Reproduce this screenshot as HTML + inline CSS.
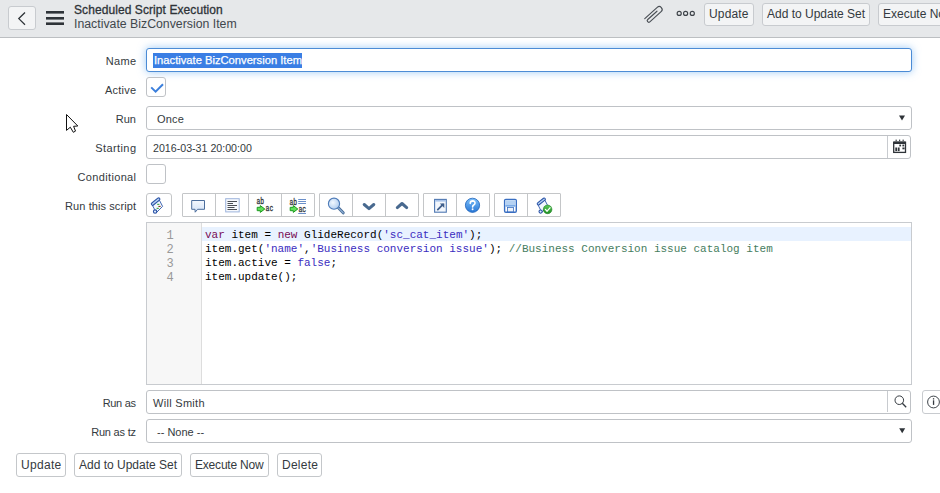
<!DOCTYPE html>
<html><head><meta charset="utf-8">
<style>
*{box-sizing:border-box;margin:0;padding:0}
html,body{width:940px;height:493px;overflow:hidden;background:#fff;font-family:"Liberation Sans",sans-serif;color:#343a40}
.abs{position:absolute}
svg{position:absolute;overflow:visible}
#hdr{position:absolute;left:0;top:0;width:940px;height:38px;background:#e6e8ea;border-bottom:1px solid #bcbfc2}
.btn{position:absolute;background:#f3f4f5;border:1px solid #c8cbcf;border-radius:3px;font-size:12px;color:#343a40;white-space:nowrap;line-height:21px;padding:0 0 0 4px}
.bb{background:#fff;line-height:23px;border-color:#c4c7ca}
.lbl{position:absolute;right:804px;font-size:11px;color:#343a40;white-space:nowrap;text-align:right;line-height:13px}
.inp{position:absolute;left:146px;width:766px;border:1px solid #bfc2c6;border-radius:3px;background:#fff;font-size:11px;white-space:nowrap;color:#343a40;line-height:13px}
.cb{position:absolute;left:146px;width:20px;height:20px;border:1px solid #bfc2c6;border-radius:3px;background:#fff}
.tb{position:absolute;top:193px;height:24px;border:1px solid #c4c6c8;border-radius:1px;background:#fff;display:flex}
.tb>div{width:33px;flex-shrink:0;height:22px;border-right:1px solid #c4c6c8;position:relative}
.tb>div:last-child{border-right:none;width:32px}
.code{position:absolute;left:205px;font-family:"Liberation Mono",monospace;font-size:11px;line-height:14px;white-space:pre;color:#000}
.ln{position:absolute;left:147px;width:26.6px;text-align:right;font-family:"Liberation Mono",monospace;font-size:12px;line-height:14px;color:#999}
.kw{color:#770a55}.st{color:#3a2cc0}.cm{color:#467d5e}
.tri{position:absolute;width:0;height:0;border-left:3px solid transparent;border-right:3px solid transparent;border-top:5px solid #2e3338}
</style></head><body>
<div id="hdr">
  <div class="btn" style="left:8px;top:6px;width:28px;height:24px"></div>
  <svg style="left:0;top:0" width="80" height="37">
    <path d="M25 12.5 L18.8 18.6 L25 24.7" fill="none" stroke="#2e3338" stroke-width="1.3"/>
    <rect x="46" y="11" width="18" height="2.6" fill="#2e3338"/>
    <rect x="46" y="17" width="18" height="2.6" fill="#2e3338"/>
    <rect x="46" y="22.4" width="18" height="2.6" fill="#2e3338"/>
  </svg>
  <div class="abs" style="left:74px;top:3px;font-size:12px;letter-spacing:0.08px;-webkit-text-stroke:0.3px #2e3338;color:#2e3338;white-space:nowrap">Scheduled Script Execution</div>
  <div class="abs" style="left:74px;top:17px;font-size:12.3px;white-space:nowrap;color:#41474d">Inactivate BizConversion Item</div>
  <svg style="left:640px;top:0" width="60" height="30">
    <path transform="translate(6.4 21.0) rotate(-42)" d="M0.4 -2.9 L17.2 -2.9 A2.9 2.9 0 0 1 17.2 2.9 L2.0 2.9 A1.55 1.55 0 0 1 2.0 -0.2 L14.4 -0.2" fill="none" stroke="#4a4f55" stroke-width="1.15" stroke-linecap="round"/>
    <circle cx="39.2" cy="13.4" r="2.05" fill="none" stroke="#3f444a" stroke-width="1.15"/>
    <circle cx="45.6" cy="13.4" r="2.05" fill="none" stroke="#3f444a" stroke-width="1.15"/>
    <circle cx="52.3" cy="13.4" r="2.05" fill="none" stroke="#3f444a" stroke-width="1.15"/>
  </svg>
  <div class="btn" style="left:704px;top:3px;width:50px;height:23px;letter-spacing:0.15px">Update</div>
  <div class="btn" style="left:762px;top:3px;width:108px;height:23px">Add to Update Set</div>
  <div class="btn" style="left:878px;top:3px;width:80px;height:23px">Execute Now</div>
</div>

<!-- Name -->
<div class="lbl" style="top:55px;letter-spacing:0.3px;right:803.70px">Name</div>
<div class="inp" style="top:48px;height:24px;border-color:#4b8bd5;box-shadow:0 0 8px rgba(90,165,240,.6)">
  <div class="abs" style="left:6px;top:4px;height:15px;width:149px;background:#3a7ee4;color:#fff;padding-left:1px;line-height:15px;font-size:11.2px;-webkit-text-stroke:0.25px #fff">Inactivate BizConversion Item</div>
</div>
<!-- Active -->
<div class="lbl" style="top:84px;letter-spacing:0.2px;right:803.80px">Active</div>
<div class="cb" style="top:77px">
  <svg style="left:0;top:0" width="20" height="20"><path d="M4.2 9.4 L8.6 13.6 L16 6.2" fill="none" stroke="#3b7fdc" stroke-width="2"/></svg>
</div>
<!-- Run -->
<div class="lbl" style="top:113px">Run</div>
<div class="inp" style="top:106px;height:24px">
  <div class="abs" style="left:10px;top:6px;letter-spacing:0.2px">Once</div>
  <svg style="left:752px;top:8px" width="8" height="7"><path d="M0 0.4 H6 L3 5.6 Z" fill="#2e3338"/></svg>
</div>
<!-- Starting -->
<div class="lbl" style="top:142px;letter-spacing:0.4px;right:803.60px">Starting</div>
<div class="inp" style="top:135px;height:24px;width:765px">
  <div class="abs" style="left:6px;top:6px;font-size:10.65px">2016-03-31 20:00:00</div>
  <div class="abs" style="left:740px;top:0;width:1px;height:22px;background:#c8cbcf"></div>
  <svg style="left:746px;top:3px" width="14" height="14">
    <rect x="0.7" y="3.2" width="11.8" height="10.2" fill="#fff" stroke="#2e3338" stroke-width="1.3"/>
    <rect x="0.7" y="2.6" width="11.8" height="2.4" fill="#2e3338"/>
    <rect x="2.6" y="0.6" width="1.1" height="1.6" fill="#2e3338"/><rect x="6.1" y="0.6" width="1.1" height="1.6" fill="#2e3338"/><rect x="9.6" y="0.6" width="1.1" height="1.6" fill="#2e3338"/>
    <rect x="2.3" y="8.5" width="1.8" height="3.6" fill="#2e3338"/><rect x="4.8" y="8.5" width="1.8" height="3.6" fill="#2e3338"/>
    <rect x="6.3" y="5.6" width="1.8" height="1.8" fill="#2e3338"/><rect x="9.4" y="5.6" width="1.8" height="1.8" fill="#2e3338"/>
    <rect x="9.4" y="8.5" width="2.2" height="1.8" fill="#2e3338"/>
  </svg>
</div>
<!-- Conditional -->
<div class="lbl" style="top:171px;letter-spacing:0.34px;right:803.66px">Conditional</div>
<div class="cb" style="top:164px"></div>
<!-- Script toolbar -->
<div class="lbl" style="top:200px;letter-spacing:0.09px;right:803.91px">Run this script</div>
<div class="tb" style="left:146px;width:26px;border-radius:3px"><div style="width:24px"></div></div>
<div class="tb" style="left:182px;width:133px"><div></div><div></div><div></div><div></div></div>
<div class="tb" style="left:319px;width:100px"><div></div><div></div><div></div></div>
<div class="tb" style="left:423px;width:67px"><div></div><div></div></div>
<div class="tb" style="left:494px;width:67px"><div></div><div></div></div>


<!-- Toolbar icons overlay -->
<svg style="left:0;top:0;pointer-events:none" width="940" height="493">
  <defs>
    <linearGradient id="gb" x1="0" y1="0" x2="0" y2="1"><stop offset="0" stop-color="#f4f8fe"/><stop offset="1" stop-color="#d2e2f7"/></linearGradient>
    <radialGradient id="gm" cx="0.4" cy="0.4" r="0.7"><stop offset="0" stop-color="#f2f8ff"/><stop offset="1" stop-color="#a9c8ee"/></radialGradient>
    <linearGradient id="gh" x1="0" y1="0" x2="0" y2="1"><stop offset="0" stop-color="#7cc0fa"/><stop offset="1" stop-color="#2877d6"/></linearGradient>
    <linearGradient id="gg" x1="0" y1="0" x2="0" y2="1"><stop offset="0" stop-color="#5cc95a"/><stop offset="1" stop-color="#1f8f23"/></linearGradient>
  </defs>
  <!-- 1 scroll -->
  <path d="M152 204.6 L159.4 200.2 L162.6 206.4 L156.6 212.4 L154.6 209.4 Z" fill="#f2f7fe" stroke="#2f58a8" stroke-width="0.9" stroke-linejoin="round"/>
  <path d="M152.6 204 L158.6 199.2" stroke="#2a53a6" stroke-width="3.6" stroke-linecap="round"/>
  <path d="M152.6 204 L158.6 199.2" stroke="#b7d0f2" stroke-width="1.5" stroke-linecap="round"/>
  <circle cx="155.1" cy="211.6" r="1.7" fill="#dfeafb" stroke="#2a53a6" stroke-width="1.1"/>
  <rect x="157.2" y="203.8" width="2.2" height="1.1" fill="#38a33c"/>
  <rect x="158.4" y="205.9" width="2.2" height="1.1" fill="#8a3a1e"/>
  <rect x="156.6" y="207.8" width="2.2" height="1.1" fill="#38a33c"/>
  <!-- 2 comment -->
  <path d="M191.7 200.5 H204.5 V209.3 H197.6 L195.2 212.2 L195 209.3 H191.7 Z" fill="url(#gb)" stroke="#4b6d9c" stroke-width="1" stroke-linejoin="round"/>
  <!-- 3 format doc -->
  <rect x="225.7" y="198.7" width="13.5" height="13.2" fill="#f7f9fd" stroke="#9db4dc" stroke-width="1"/>
  <g fill="#4a4e54">
    <rect x="227.5" y="201" width="9.5" height="1"/>
    <rect x="227.5" y="203" width="5.5" height="1"/>
    <rect x="227.5" y="205" width="9.5" height="1"/>
    <rect x="227.5" y="207" width="7" height="1"/>
    <rect x="227.5" y="209" width="9.5" height="1"/>
  </g>
  <!-- 4 replace -->
  <g font-family="Liberation Mono" font-size="8" fill="#2d3136" stroke="#2d3136" stroke-width="0.25" transform="translate(0 -36) scale(1 1.18)">
    <text x="256.4" y="203.8" textLength="7.6" lengthAdjust="spacingAndGlyphs">ab</text>
    <text x="265.5" y="209.6" textLength="7.8" lengthAdjust="spacingAndGlyphs">ac</text>
  </g>
  <path d="M257.2 207.3 H260.3 V205.6 L264.8 209 L260.3 212.4 V210.7 H257.2 Z" fill="#5fe05a" stroke="#1d9a20" stroke-width="1" stroke-linejoin="round"/>
  <!-- 5 replace all -->
  <g font-family="Liberation Mono" font-size="8" fill="#2d3136" stroke="#2d3136" stroke-width="0.25" transform="translate(0 -36) scale(1 1.18)">
    <text x="289.4" y="204.2" textLength="7.6" lengthAdjust="spacingAndGlyphs">ab</text>
    <text x="298.4" y="210" textLength="7.8" lengthAdjust="spacingAndGlyphs">ac</text>
  </g>
  <g fill="#5b84c4">
    <rect x="298.2" y="199" width="7.8" height="0.9"/>
    <rect x="298.2" y="201" width="7.8" height="0.9"/>
    <rect x="298.2" y="203" width="7.8" height="0.9"/>
    <rect x="298.2" y="213" width="7.8" height="0.9"/>
  </g>
  <path d="M290.2 207.3 H293.3 V205.6 L297.8 209 L293.3 212.4 V210.7 H290.2 Z" fill="#5fe05a" stroke="#1d9a20" stroke-width="1" stroke-linejoin="round"/>
  <!-- 6 magnifier -->
  <path d="M338.4 207.8 L343.2 212.8" stroke="#4a6d98" stroke-width="3" stroke-linecap="round"/>
  <path d="M338.4 207.8 L343.2 212.8" stroke="#8fb0d6" stroke-width="1.2" stroke-linecap="round"/>
  <circle cx="334" cy="203.7" r="5.6" fill="url(#gm)" stroke="#4f7cb8" stroke-width="1.1"/>
  <!-- 7 down -->
  <path d="M364.2 204.5 L369 208.6 L373.8 204.5" fill="none" stroke="#48698f" stroke-width="3" stroke-linecap="round" stroke-linejoin="round"/>
  <!-- 8 up -->
  <path d="M397.3 207.6 L402 203.5 L406.7 207.6" fill="none" stroke="#48698f" stroke-width="3" stroke-linecap="round" stroke-linejoin="round"/>
  <!-- 9 expand -->
  <rect x="434.6" y="199.4" width="11.7" height="12.8" fill="#f3f7fd" stroke="#4f78b2" stroke-width="1.1"/>
  <rect x="435.2" y="200" width="10.6" height="1.6" fill="#a8c3ea"/>
  <path d="M437.8 209.6 L443 204.4" stroke="#3f5f8c" stroke-width="1.8" stroke-linecap="round"/>
  <path d="M439.8 203.4 H444.3 V207.9 Z" fill="#3f5f8c"/>
  <!-- 10 help -->
  <circle cx="472.5" cy="205.3" r="7.1" fill="url(#gh)" stroke="#1b5fb8" stroke-width="0.8"/>
  <path d="M470.2 203.4 Q470.3 200.9 472.7 200.9 Q475.1 201 475 203.2 Q474.9 204.5 473.4 205.3 Q472.6 205.8 472.6 207" fill="none" stroke="#fff" stroke-width="1.6" stroke-linecap="round"/>
  <circle cx="472.6" cy="209.2" r="0.95" fill="#fff"/>
  <!-- 11 save -->
  <rect x="504.6" y="199.4" width="11.7" height="12.8" rx="1.2" fill="#fff" stroke="#3a6fc2" stroke-width="1.4"/>
  <rect x="505.4" y="200.2" width="10.1" height="6" fill="#b5d2f3"/>
  <rect x="505.4" y="205.2" width="10.1" height="1.4" fill="#6ea3e4"/>
  <rect x="507.5" y="207.5" width="6" height="4.3" fill="#eef3f9" stroke="#3a6fc2" stroke-width="0.8"/>
  <!-- 12 scroll check -->
  <path d="M537.8 204.4 L544.8 200 L547.6 205.4 L541.8 212.4 L540.2 209.2 Z" fill="#f2f7fe" stroke="#2f58a8" stroke-width="0.9" stroke-linejoin="round"/>
  <path d="M538.4 203.8 L544.2 199.2" stroke="#2a53a6" stroke-width="3.4" stroke-linecap="round"/>
  <path d="M538.4 203.8 L544.2 199.2" stroke="#b7d0f2" stroke-width="1.4" stroke-linecap="round"/>
  <circle cx="540.6" cy="211.6" r="1.6" fill="#dfeafb" stroke="#2a53a6" stroke-width="1.1"/>
  <circle cx="547.6" cy="209.4" r="4.3" fill="url(#gg)" stroke="#1c7f22" stroke-width="0.6"/>
  <path d="M545.4 209.4 L547.1 211.2 L550 207.8" fill="none" stroke="#fff" stroke-width="1.3" stroke-linecap="round" stroke-linejoin="round"/>
</svg>

<!-- Editor -->
<div class="abs" style="left:146px;top:222px;width:766px;height:163px;border:1px solid #c8cbcf;background:#fff">
  <div class="abs" style="left:0;top:0;width:55px;height:161px;background:#f7f7f7;border-right:1px solid #ddd"></div>
  <div class="abs" style="left:55px;top:4px;width:709px;height:14px;background:#e8f2ff"></div>
</div>
<div class="ln" style="top:228.7px">1<br>2<br>3<br>4</div>
<div class="code" style="top:228px"><span class="kw">var</span> item = <span class="kw">new</span> GlideRecord(<span class="st">'sc_cat_item'</span>);
item.get(<span class="st">'name'</span>,<span class="st">'Business conversion issue'</span>); <span class="cm">//Business Conversion issue catalog item</span>
item.active = <span class="st">false</span>;
item.update();</div>

<!-- Run as -->
<div class="lbl" style="top:397px;letter-spacing:-0.3px;right:804.30px">Run as</div>
<div class="inp" style="top:390px;height:24px;width:765px">
  <div class="abs" style="left:6px;top:6px;letter-spacing:0.3px">Will Smith</div>
  <div class="abs" style="left:740px;top:0;width:1px;height:21px;background:#c8cbcf"></div>
  <svg style="left:740px;top:0" width="24" height="22">
    <circle cx="12.3" cy="9.2" r="4.3" fill="none" stroke="#343a40" stroke-width="1"/>
    <path d="M15.3 12.2 L19.2 16.2" stroke="#343a40" stroke-width="1.3"/>
  </svg>
</div>
<div class="btn" style="left:922px;top:390px;width:30px;height:24px;background:#fff"></div>
<svg style="left:922px;top:390px" width="18" height="23">
  <circle cx="11.5" cy="12" r="5.9" fill="none" stroke="#343a40" stroke-width="0.95"/>
  <rect x="10.9" y="10.3" width="1.3" height="4.6" fill="#343a40"/><rect x="10.9" y="8.2" width="1.3" height="1.3" fill="#343a40"/>
</svg>
<!-- Run as tz -->
<div class="lbl" style="top:426px;letter-spacing:-0.2px;right:804.20px">Run as tz</div>
<div class="inp" style="top:419px;height:24px">
  <div class="abs" style="left:10px;top:6px">-- None --</div>
  <svg style="left:752px;top:8px" width="8" height="7"><path d="M0.2 0.3 H6.2 L3.2 5.3 Z" fill="#2e3338"/></svg>
</div>

<!-- Bottom buttons -->
<div class="btn bb" style="left:16px;top:453px;width:50px;height:24px;letter-spacing:0.3px">Update</div>
<div class="btn bb" style="left:74px;top:453px;width:108px;height:24px">Add to Update Set</div>
<div class="btn bb" style="left:190px;top:453px;width:79px;height:24px;letter-spacing:-0.2px">Execute Now</div>
<div class="btn bb" style="left:277px;top:453px;width:45px;height:24px;letter-spacing:0.25px">Delete</div>

<!-- Cursor -->
<svg style="left:66px;top:114px" width="14" height="20">
  <path d="M0.5 0.5 L0.5 16.4 L4.3 13.2 L7.3 18.3 L9.5 17.1 L7.6 12.3 L11.8 12.0 Z" fill="#fff" stroke="#111" stroke-width="1" stroke-linejoin="round"/>
</svg>
</body></html>
